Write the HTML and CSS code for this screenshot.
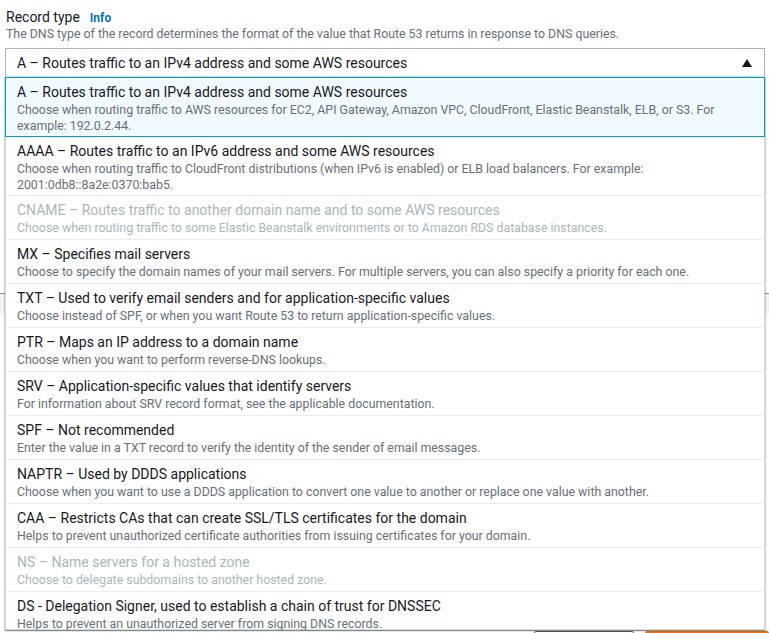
FILE: index.html
```html
<!DOCTYPE html>
<html lang="en">
<head>
<meta charset="utf-8">
<title>Record type</title>
<link rel="stylesheet" href="styles.css">
</head>
<body>
<div class="page">
  <div class="field">
    <div class="label-row"><span class="label">Record type</span><a class="info">Info</a></div>
    <div class="hint">The DNS type of the record determines the format of the value that Route 53 returns in response to DNS queries.</div>
    <div class="select">
      <span>A – Routes traffic to an IPv4 address and some AWS resources</span>
      <svg class="caret" width="10" height="8" viewBox="0 0 10 8"><polygon points="5,0 10,8 0,8" fill="#16191f"/></svg>
    </div>
  </div>
  <div class="behind">
    <div class="strip"></div>
    <div class="rest"></div>
  </div>
  <div class="actions">
    <button class="btn" aria-label="Cancel"></button>
    <button class="btn primary" aria-label="Create records"></button>
  </div>

  <ul class="dropdown">
    <li class="opt two selected">
      <div class="title">A – Routes traffic to an IPv4 address and some AWS resources</div>
      <div class="desc">Choose when routing traffic to AWS resources for EC2, API Gateway, Amazon VPC, CloudFront, Elastic Beanstalk, ELB, or S3. For<br>example: 192.0.2.44.</div>
    </li>
    <li class="opt two after-selected">
      <div class="title">AAAA – Routes traffic to an IPv6 address and some AWS resources</div>
      <div class="desc">Choose when routing traffic to CloudFront distributions (when IPv6 is enabled) or ELB load balancers. For example:<br>2001:0db8::8a2e:0370:bab5.</div>
    </li>
    <li class="opt disabled">
      <div class="title">CNAME – Routes traffic to another domain name and to some AWS resources</div>
      <div class="desc">Choose when routing traffic to some Elastic Beanstalk environments or to Amazon RDS database instances.</div>
    </li>
    <li class="opt">
      <div class="title">MX – Specifies mail servers</div>
      <div class="desc">Choose to specify the domain names of your mail servers. For multiple servers, you can also specify a priority for each one.</div>
    </li>
    <li class="opt">
      <div class="title">TXT – Used to verify email senders and for application-specific values</div>
      <div class="desc">Choose instead of SPF, or when you want Route 53 to return application-specific values.</div>
    </li>
    <li class="opt">
      <div class="title">PTR – Maps an IP address to a domain name</div>
      <div class="desc">Choose when you want to perform reverse-DNS lookups.</div>
    </li>
    <li class="opt">
      <div class="title">SRV – Application-specific values that identify servers</div>
      <div class="desc">For information about SRV record format, see the applicable documentation.</div>
    </li>
    <li class="opt">
      <div class="title">SPF – Not recommended</div>
      <div class="desc">Enter the value in a TXT record to verify the identity of the sender of email messages.</div>
    </li>
    <li class="opt">
      <div class="title">NAPTR – Used by DDDS applications</div>
      <div class="desc">Choose when you want to use a DDDS application to convert one value to another or replace one value with another.</div>
    </li>
    <li class="opt">
      <div class="title">CAA – Restricts CAs that can create SSL/TLS certificates for the domain</div>
      <div class="desc">Helps to prevent unauthorized certificate authorities from issuing certificates for your domain.</div>
    </li>
    <li class="opt disabled">
      <div class="title">NS – Name servers for a hosted zone</div>
      <div class="desc">Choose to delegate subdomains to another hosted zone.</div>
    </li>
    <li class="opt">
      <div class="title">DS - Delegation Signer, used to establish a chain of trust for DNSSEC</div>
      <div class="desc">Helps to prevent an unauthorized server from signing DNS records.</div>
    </li>
  </ul>
</div>
</body>
</html>
```

FILE: styles.css
```css
html, body {
  margin: 0;
  padding: 0;
  background: #ffffff;
}

body {
  font-family: Roboto, "Liberation Sans", Arial, sans-serif;
  color: #16191f;
  width: 769px;
  height: 633px;
  overflow: hidden;
}

.page {
  position: relative;
  width: 769px;
  height: 633px;
  overflow: hidden;
}

.field {
  padding: 9px 4px 0 5px;
}

.label-row {
  display: flex;
  align-items: baseline;
  gap: 10px;
  padding-left: 1px;
  line-height: 16px;
}

.label {
  font-size: 14px;
}

.info {
  font-size: 12px;
  font-weight: 700;
  color: #0073bb;
}

.hint {
  padding-left: 1px;
  font-size: 12.35px;
  line-height: 16px;
  color: #687078;
}

.select {
  margin-top: 6px;
  height: 29px;
  box-sizing: border-box;
  border: 1px solid #aab7b8;
  display: flex;
  align-items: center;
  justify-content: space-between;
  padding: 0 12px 0 11px;
  font-size: 14px;
  line-height: 20px;
  background: #fff;
}

.caret {
  display: block;
}

.behind {
  margin-top: 216px;
}

.strip {
  height: 20px;
  border-top: 1px solid #879596;
  background: #f2f3f3;
}

.rest {
  height: 317px;
  background: #ffffff;
}

.actions {
  display: flex;
  justify-content: flex-end;
  gap: 11px;
}

.btn {
  height: 32px;
  width: 100px;
  border: 1px solid #545b64;
  border-radius: 2px;
  background: #ffffff;
}

.btn.primary {
  width: 124px;
  background: #ec7211;
  border-color: #ec7211;
}

.dropdown {
  position: absolute;
  top: 76px;
  left: 5px;
  width: 760px;
  height: 554px;
  margin: 0;
  padding: 1px 0 0;
  box-sizing: border-box;
  list-style: none;
  overflow: hidden;
  background: #ffffff;
  box-shadow: inset 0 0 0 1px #d5dbdb, 0 1px 1px 0 rgba(0, 28, 36, 0.3), 1px 1px 1px 0 rgba(0, 28, 36, 0.15), -1px 1px 1px 0 rgba(0, 28, 36, 0.15);
}

.opt {
  padding: 4px 11px 3px;
  border-style: solid;
  border-color: #eaeded transparent transparent;
  border-width: 1px 1px 0;
}

.opt.two {
  padding-bottom: 2px;
}

.opt.selected {
  border-width: 1px;
  border-color: #00a1c9;
  background: #f1faff;
}

.opt.after-selected {
  border-top-width: 0;
}

.title {
  font-size: 14px;
  line-height: 20px;
  color: #16191f;
}

.desc {
  font-size: 12.35px;
  line-height: 16px;
  color: #687078;
}

.opt.disabled .title,
.opt.disabled .desc {
  color: #aab7b8;
}
```
